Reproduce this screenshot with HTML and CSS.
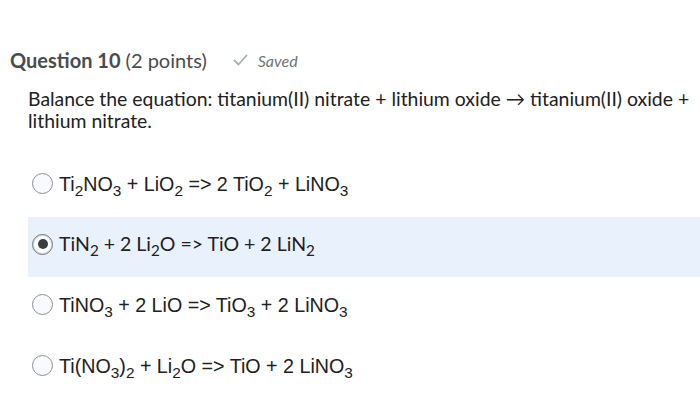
FILE: index.html
```html
<!DOCTYPE html>
<html>
<head>
<meta charset="utf-8">
<link rel="stylesheet" href="styles.css">
</head>
<body>
<div class="page">
  <div class="qhead">
    <span class="qtitle"><b>Question 10</b> (2 points)</span>
    <span class="saved">
      <svg class="check" width="15" height="12" viewBox="0 0 15 12"><path d="M1.5 6.5 L5.5 10.5 L13.5 1.5" fill="none" stroke="#a9b1b6" stroke-width="1.8" stroke-linecap="round" stroke-linejoin="round"/></svg>
      <i>Saved</i>
    </span>
  </div>
  <div class="qtext">Balance the equation: titanium(II) nitrate + lithium oxide → titanium(II) oxide + lithium nitrate.</div>
  <div class="options">
    <div class="opt">
      <span class="radio"></span>
      <span class="label alt">Ti<sub>2</sub>NO<sub>3</sub> + LiO<sub>2</sub> =&gt; 2 TiO<sub>2</sub> + LiNO<sub>3</sub></span>
    </div>
    <div class="opt selected">
      <span class="radio on"><span class="dot"></span></span>
      <span class="label">TiN<sub>2</sub> + 2 Li<sub>2</sub>O =&gt; TiO + 2 LiN<sub>2</sub></span>
    </div>
    <div class="opt">
      <span class="radio"></span>
      <span class="label alt">TiNO<sub>3</sub> + 2 LiO =&gt; TiO<sub>3</sub> + 2 LiNO<sub>3</sub></span>
    </div>
    <div class="opt">
      <span class="radio"></span>
      <span class="label alt">Ti(NO<sub>3</sub>)<sub>2</sub> + Li<sub>2</sub>O =&gt; TiO + 2 LiNO<sub>3</sub></span>
    </div>
  </div>
</div>
</body>
</html>
```
FILE: styles.css
```css
html, body { margin: 0; padding: 0; background: #fff; }
body { font-family: Lato, "Open Sans", sans-serif; color: #202122; }
.page { padding: 48px 0 0 10px; }
.qhead { display: flex; align-items: center; height: 24px; }
.qtitle { font-size: 20px; color: #494c4e; }
.qtitle b { font-weight: 700; }
.saved { margin-left: 26px; display: flex; align-items: center; color: #6e7477; font-size: 16px; }
.check { margin-right: 10px; }
.saved i { font-style: italic; }
.qtext { margin: 16px 0 0 18px; font-size: 19.4px; line-height: 22px; width: 672px; color: #202122; }
.options { margin: 24px 0 0 18px; display: flex; flex-direction: column; }
.opt { height: 61px; display: flex; align-items: center; box-sizing: border-box; padding-bottom: 6px; }
.opt.selected { height: 60px; background: #e8f1fc; }
.radio { flex: none; width: 21px; height: 21px; border-radius: 50%; border: 1px solid #8a8f93; background: #f9fafe; box-sizing: border-box; margin-left: 4px; margin-right: 6px; display: flex; align-items: center; justify-content: center; }
.radio.on { border: 1px solid #6e7477; background: #fff; box-shadow: 0 0 0 1px #d6d9dc inset; }
.dot { width: 10px; height: 10px; border-radius: 50%; background: #3c3f41; }
.label { font-size: 19.5px; line-height: 22px; color: #202122; }
.label.alt { font-family: "Liberation Sans", Arial, sans-serif; font-size: 19.7px; }
sub { font-size: 0.78em; vertical-align: -0.3em; line-height: 0; }
```
